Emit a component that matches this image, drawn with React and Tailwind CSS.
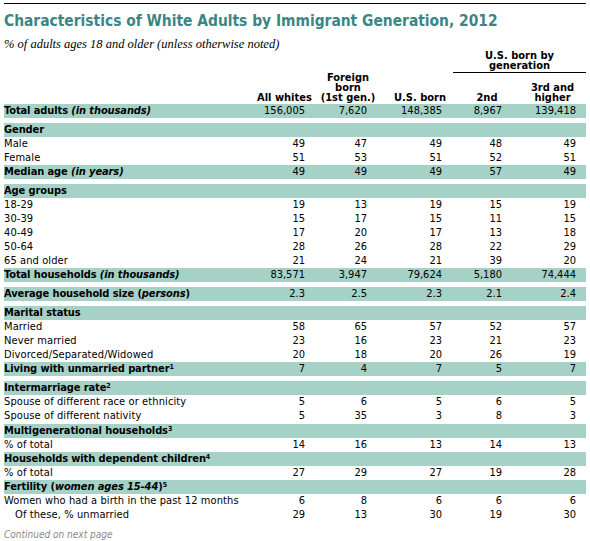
const COLS = "grid grid-cols-[253px_54px_74px_70px_64px_67px]";
const PR = ["pr-[6px]", "pr-[18px]", "pr-[13px]", "pr-[17px]", "pr-[10px]"];
const SANS = "'DejaVu Sans Condensed', 'DejaVu Sans', Verdana, sans-serif";

const rows = [
  { t: "band", label: <>Total adults <i>(in thousands)</i></>, v: ["156,005", "7,620", "148,385", "8,967", "139,418"] },
  { t: "band", gap: true, label: "Gender" },
  { label: "Male", v: ["49", "47", "49", "48", "49"] },
  { label: "Female", v: ["51", "53", "51", "52", "51"] },
  { t: "band", label: <>Median age <i>(in years)</i></>, v: ["49", "49", "49", "57", "49"] },
  { t: "band", gap: true, label: "Age groups" },
  { label: "18-29", v: ["19", "13", "19", "15", "19"] },
  { label: "30-39", v: ["15", "17", "15", "11", "15"] },
  { label: "40-49", v: ["17", "20", "17", "13", "18"] },
  { label: "50-64", v: ["28", "26", "28", "22", "29"] },
  { label: "65 and older", v: ["21", "24", "21", "39", "20"] },
  { t: "band", label: <>Total households <i>(in thousands)</i></>, v: ["83,571", "3,947", "79,624", "5,180", "74,444"] },
  { t: "band", gap: true, label: <>Average household size (<i>persons</i>)</>, v: ["2.3", "2.5", "2.3", "2.1", "2.4"] },
  { t: "band", gap: true, label: "Marital status" },
  { label: "Married", v: ["58", "65", "57", "52", "57"] },
  { label: "Never married", v: ["23", "16", "23", "21", "23"] },
  { label: "Divorced/Separated/Widowed", v: ["20", "18", "20", "26", "19"] },
  { t: "band", label: <>Living with unmarried partner<sup className="text-[7px]">1</sup></>, v: ["7", "4", "7", "5", "7"] },
  { t: "band", gap: true, label: <>Intermarriage rate<sup className="text-[7px]">2</sup></> },
  { label: "Spouse of different race or ethnicity", v: ["5", "6", "5", "6", "5"] },
  { label: "Spouse of different nativity", v: ["5", "35", "3", "8", "3"] },
  { t: "band", small: true, label: <>Multigenerational households<sup className="text-[7px]">3</sup></> },
  { label: "% of total", v: ["14", "16", "13", "14", "13"] },
  { t: "band", label: <>Households with dependent children<sup className="text-[7px]">4</sup></> },
  { label: "% of total", v: ["27", "29", "27", "19", "28"] },
  { t: "band", label: <>Fertility (<i>women ages 15-44</i>)<sup className="text-[7px]">5</sup></> },
  { label: "Women who had a birth in the past 12 months", v: ["6", "8", "6", "6", "6"] },
  { label: "Of these, % unmarried", indent: true, v: ["29", "13", "30", "19", "30"] },
];

function Row({ r }) {
  const band = r.t === "band";
  return (
    <div className={`${COLS} h-[14px] leading-[14px] ${band ? "bg-[#a5d1c7]" : ""} ${r.gap ? "mt-[5px]" : ""} ${r.small ? "mt-[1px]" : ""}`}>
      <div className={`whitespace-nowrap ${band ? "font-bold tracking-[-0.1px]" : "tracking-[0.1px]"} ${r.indent ? "pl-[11px]" : ""}`}>{r.label}</div>
      {(r.v || ["", "", "", "", ""]).map((x, i) => (
        <div key={i} className={`text-right ${PR[i]}`}>{x}</div>
      ))}
    </div>
  );
}

export default function App() {
  return (
    <div className="bg-white w-[590px] h-[541px] text-black overflow-hidden" style={{ fontFamily: SANS }}>
      <div className="ml-[4px] w-[582px] pt-[3px]">
        <div className="border-t border-black" />
        <h1 className="text-[15.4px] font-bold text-[#3b8585] mt-[8px] leading-[18px] whitespace-nowrap">
          Characteristics of White Adults by Immigrant Generation, 2012
        </h1>
        <div className="italic text-[12.5px] mt-[7px] leading-[14px]" style={{ fontFamily: "'Liberation Serif', Georgia, serif" }}>
          % of adults ages 18 and older (unless otherwise noted)
        </div>
        <div className="text-[11px] font-bold leading-[10px]">
          <div className={COLS}>
            <div className="col-span-4" />
            <div className="col-span-2 text-center border-b border-black pb-[1px] ml-[-2px]">U.S. born by<br />generation</div>
          </div>
          <div className={`${COLS} items-end h-[31px] pb-[1px]`}>
            <div />
            <div className="text-center whitespace-nowrap">All whites</div>
            <div className="text-center whitespace-nowrap">Foreign<br />born<br />(1st gen.)</div>
            <div className="text-center whitespace-nowrap">U.S. born</div>
            <div className="text-center">2nd</div>
            <div className="text-center">3rd and<br />higher</div>
          </div>
        </div>
        <div className="text-[11px]">
          {rows.map((r, i) => <Row key={i} r={r} />)}
        </div>
        <div className="italic text-[10px] text-[#8a8a8a] mt-[5px]">Continued on next page</div>
      </div>
    </div>
  );
}
